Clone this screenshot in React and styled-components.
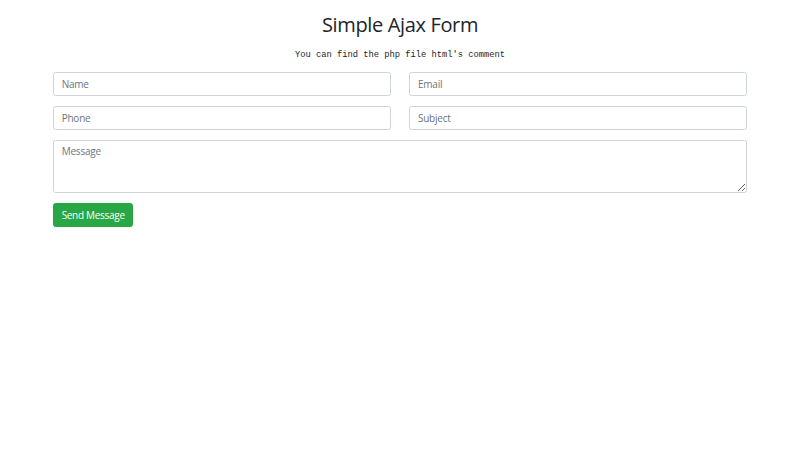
import React from "react";
import styled, { createGlobalStyle } from "styled-components";

const Global = createGlobalStyle`
  html, body { margin: 0; padding: 0; background: #fff; }
  body {
    font-family: "Open Sans", "Noto Sans", Arial, sans-serif;
    color: #212529;
    font-size: 10px;
    line-height: 1.5;
  }
  * { box-sizing: border-box; }
`;

const Container = styled.div`
  width: 693.75px;
  margin: 0 auto;
  padding-top: 13px;
`;

const Title = styled.h2`
  margin: 0 0 12px;
  text-align: center;
  font-size: 20px;
  font-weight: 400;
  line-height: 1.2;
  letter-spacing: -0.35px;
  color: #212529;
`;

const Note = styled.p`
  margin: 0 0 10px;
  text-align: center;
  font-family: "Liberation Mono", "DejaVu Sans Mono", monospace;
  font-size: 8.75px;
  line-height: 1.5;
  color: #212529;
`;

const Form = styled.form`
  display: flex;
  flex-direction: column;
`;

const Row = styled.div`
  display: grid;
  grid-template-columns: 1fr 1fr;
  column-gap: 18.75px;
`;

const Group = styled.div`
  margin-bottom: 10px;
`;

const fieldBase = `
  display: block;
  width: 100%;
  padding: 3.75px 7.5px;
  font-family: inherit;
  font-size: 10px;
  line-height: 1.5;
  letter-spacing: -0.2px;
  color: #495057;
  background: #fff;
  border: 1px solid #ced4da;
  border-radius: 2.5px;
  outline: none;
  &::placeholder { color: #6c757d; opacity: 1; }
`;

const Input = styled.input`
  ${fieldBase}
  height: 23.75px;
`;

const TextArea = styled.textarea`
  ${fieldBase}
  height: 53.75px;
  resize: vertical;
`;

const Button = styled.button`
  align-self: flex-start;
  height: 23.75px;
  padding: 0 7.5px;
  font-family: inherit;
  font-size: 10px;
  line-height: 1.5;
  letter-spacing: -0.3px;
  color: #fff;
  background: #28a745;
  border: 1px solid #28a745;
  border-radius: 2.5px;
  cursor: pointer;
`;

export default function App() {
  return (
    <>
      <Global />
      <Container>
        <Title>Simple Ajax Form</Title>
        <Note>You can find the php file html's comment</Note>
        <Form onSubmit={(e) => e.preventDefault()}>
          <Row>
            <Group><Input placeholder="Name" /></Group>
            <Group><Input placeholder="Email" /></Group>
          </Row>
          <Row>
            <Group><Input placeholder="Phone" /></Group>
            <Group><Input placeholder="Subject" /></Group>
          </Row>
          <Group><TextArea rows={3} placeholder="Message" /></Group>
          <Button type="submit">Send Message</Button>
        </Form>
      </Container>
    </>
  );
}
